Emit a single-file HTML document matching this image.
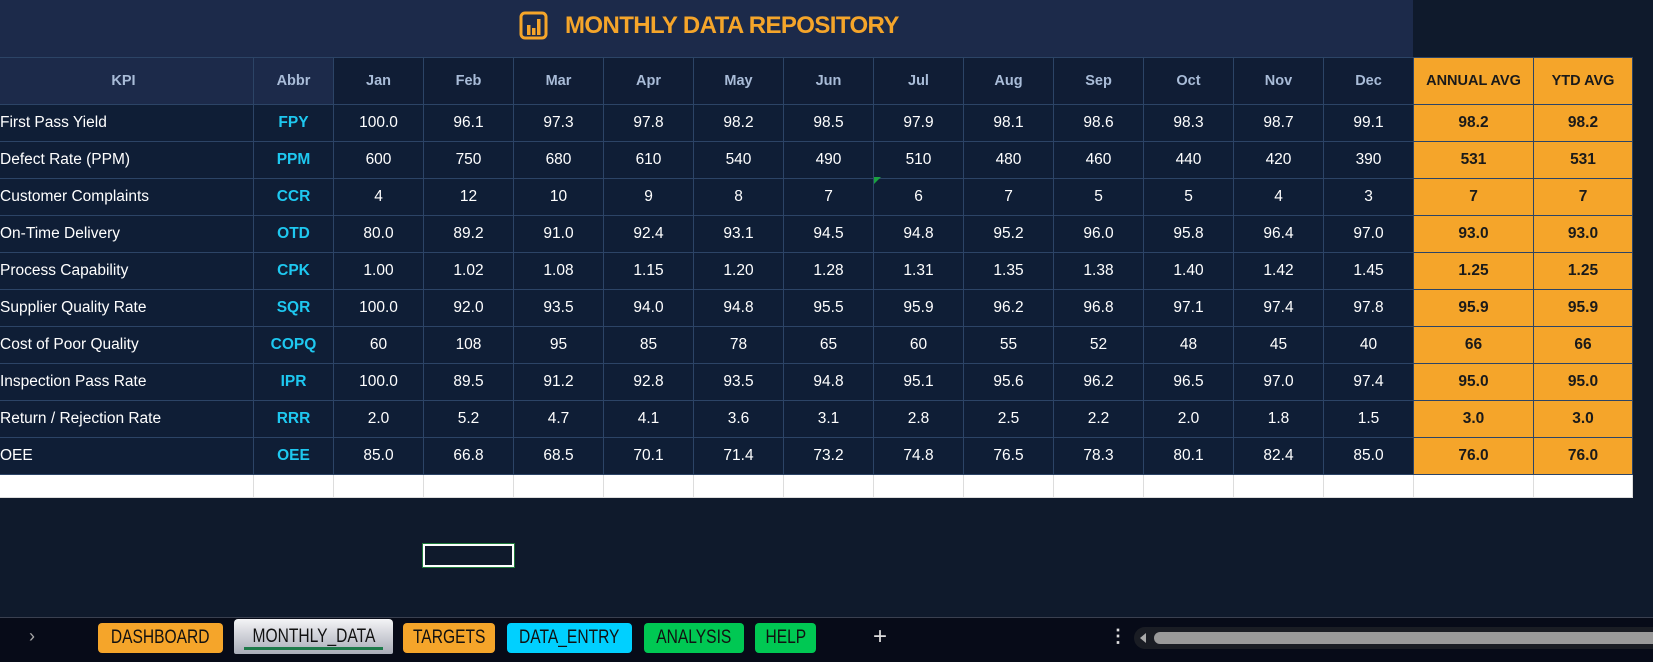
<!DOCTYPE html>
<html><head><meta charset="utf-8"><style>
*{margin:0;padding:0;box-sizing:border-box}
body{width:1653px;height:662px;background:#0f1a2c;overflow:hidden;position:relative;font-family:"Liberation Sans",sans-serif}
#title{position:absolute;left:0;top:0;width:1413px;height:57px;background:#1c2a4a}
#title .t{position:absolute;left:565px;top:12px;color:#f5a52a;font-weight:bold;font-size:24px;letter-spacing:-0.6px;white-space:nowrap}
table{position:absolute;left:-7px;top:57px;border-collapse:collapse;table-layout:fixed}
td{border:1px solid #2c4466;height:37px;text-align:center;color:#fff;font-size:15.5px;background:#0f1e36}
tr.h td{height:47px;color:#a9bcd8;font-weight:bold;font-size:14.5px;background:#101d35}
tr.h td.l{background:#1c2a4a}
td.k{text-align:left;padding-left:6px}
td.a{color:#1ec8f0;font-weight:bold}
td.o{background:#f5a52a;color:#1a1a1a;font-weight:bold}
tr.h td.o{background:#f5a52a;color:#1a1a1a}
tr.w td{background:#fff;height:23px;border-color:#ddd}
#sel{position:absolute;left:423px;top:544px;width:91px;height:23px;border:2px solid #fff;outline:1px solid #1d7a3a}
#bar{position:absolute;left:0;top:617px;width:1653px;height:45px;background:#070b18;border-top:1px solid #3a4050}
.tab{position:absolute;top:5px;height:30px;border-radius:4px;font-size:19px;color:#111;display:flex;align-items:center;justify-content:center;white-space:nowrap}
.tab span{display:inline-block;transform:scaleX(.82)}
</style></head><body>
<div id="title">
<svg style="position:absolute;left:519px;top:11px" width="29" height="29" viewBox="0 0 29 29"><rect x="2" y="2" width="25" height="25" rx="4" fill="none" stroke="#f5a52a" stroke-width="3"/><rect x="8" y="14" width="3.5" height="10" fill="#f5a52a"/><rect x="13" y="17" width="3.5" height="7" fill="#f5a52a"/><rect x="18" y="8" width="3.5" height="16" fill="#f5a52a"/></svg>
<div class="t">MONTHLY DATA REPOSITORY</div></div>
<table>
<colgroup><col style="width:260px"><col style="width:80px"><col span="12" style="width:90px"><col style="width:120px"><col style="width:99px"></colgroup>
<tr class="h"><td class="l">KPI</td><td class="l">Abbr</td><td>Jan</td><td>Feb</td><td>Mar</td><td>Apr</td><td>May</td><td>Jun</td><td>Jul</td><td>Aug</td><td>Sep</td><td>Oct</td><td>Nov</td><td>Dec</td><td class="o">ANNUAL AVG</td><td class="o">YTD AVG</td></tr>
<tr><td class="k">First Pass Yield</td><td class="a">FPY</td><td>100.0</td><td>96.1</td><td>97.3</td><td>97.8</td><td>98.2</td><td>98.5</td><td>97.9</td><td>98.1</td><td>98.6</td><td>98.3</td><td>98.7</td><td>99.1</td><td class="o">98.2</td><td class="o">98.2</td></tr>
<tr><td class="k">Defect Rate (PPM)</td><td class="a">PPM</td><td>600</td><td>750</td><td>680</td><td>610</td><td>540</td><td>490</td><td>510</td><td>480</td><td>460</td><td>440</td><td>420</td><td>390</td><td class="o">531</td><td class="o">531</td></tr>
<tr><td class="k">Customer Complaints</td><td class="a">CCR</td><td>4</td><td>12</td><td>10</td><td>9</td><td>8</td><td>7</td><td>6</td><td>7</td><td>5</td><td>5</td><td>4</td><td>3</td><td class="o">7</td><td class="o">7</td></tr>
<tr><td class="k">On-Time Delivery</td><td class="a">OTD</td><td>80.0</td><td>89.2</td><td>91.0</td><td>92.4</td><td>93.1</td><td>94.5</td><td>94.8</td><td>95.2</td><td>96.0</td><td>95.8</td><td>96.4</td><td>97.0</td><td class="o">93.0</td><td class="o">93.0</td></tr>
<tr><td class="k">Process Capability</td><td class="a">CPK</td><td>1.00</td><td>1.02</td><td>1.08</td><td>1.15</td><td>1.20</td><td>1.28</td><td>1.31</td><td>1.35</td><td>1.38</td><td>1.40</td><td>1.42</td><td>1.45</td><td class="o">1.25</td><td class="o">1.25</td></tr>
<tr><td class="k">Supplier Quality Rate</td><td class="a">SQR</td><td>100.0</td><td>92.0</td><td>93.5</td><td>94.0</td><td>94.8</td><td>95.5</td><td>95.9</td><td>96.2</td><td>96.8</td><td>97.1</td><td>97.4</td><td>97.8</td><td class="o">95.9</td><td class="o">95.9</td></tr>
<tr><td class="k">Cost of Poor Quality</td><td class="a">COPQ</td><td>60</td><td>108</td><td>95</td><td>85</td><td>78</td><td>65</td><td>60</td><td>55</td><td>52</td><td>48</td><td>45</td><td>40</td><td class="o">66</td><td class="o">66</td></tr>
<tr><td class="k">Inspection Pass Rate</td><td class="a">IPR</td><td>100.0</td><td>89.5</td><td>91.2</td><td>92.8</td><td>93.5</td><td>94.8</td><td>95.1</td><td>95.6</td><td>96.2</td><td>96.5</td><td>97.0</td><td>97.4</td><td class="o">95.0</td><td class="o">95.0</td></tr>
<tr><td class="k">Return / Rejection Rate</td><td class="a">RRR</td><td>2.0</td><td>5.2</td><td>4.7</td><td>4.1</td><td>3.6</td><td>3.1</td><td>2.8</td><td>2.5</td><td>2.2</td><td>2.0</td><td>1.8</td><td>1.5</td><td class="o">3.0</td><td class="o">3.0</td></tr>
<tr><td class="k">OEE</td><td class="a">OEE</td><td>85.0</td><td>66.8</td><td>68.5</td><td>70.1</td><td>71.4</td><td>73.2</td><td>74.8</td><td>76.5</td><td>78.3</td><td>80.1</td><td>82.4</td><td>85.0</td><td class="o">76.0</td><td class="o">76.0</td></tr>
<tr class="w"><td></td><td></td><td></td><td></td><td></td><td></td><td></td><td></td><td></td><td></td><td></td><td></td><td></td><td></td><td></td><td></td></tr>
</table>
<div style="position:absolute;left:874px;top:177px;width:0;height:0;border-top:7px solid #1aa040;border-right:7px solid transparent"></div>
<div id="sel"></div>
<div id="bar">
<div style="position:absolute;left:29px;top:8px;color:#aaa;font-size:18px">›</div>
<div class="tab" style="left:98px;width:125px;background:#f5a52a"><span>DASHBOARD</span></div>
<div class="tab" style="left:234px;width:159px;top:1px;height:35px;background:linear-gradient(#f4f4f6,#a8acb8);border-radius:4px 4px 2px 2px"><span>MONTHLY_DATA</span><div style="position:absolute;left:10px;right:10px;bottom:4px;height:3px;background:#1d7a4a"></div></div>
<div class="tab" style="left:403px;width:92px;background:#f5a52a"><span>TARGETS</span></div>
<div class="tab" style="left:507px;width:125px;background:#00d0ff"><span>DATA_ENTRY</span></div>
<div class="tab" style="left:644px;width:100px;background:#00c853"><span>ANALYSIS</span></div>
<div class="tab" style="left:755px;width:61px;background:#00c853"><span>HELP</span></div>
<div style="position:absolute;left:873px;top:5px;color:#ddd;font-size:24px">+</div>
<div style="position:absolute;left:1109px;top:8px;color:#ddd;font-size:18px;font-weight:bold">⋮</div>
<div style="position:absolute;left:1134px;top:9px;width:519px;height:22px;background:#1a1d24;border-radius:11px 0 0 11px"></div>
<div style="position:absolute;left:1140px;top:15px;width:0;height:0;border-right:6px solid #aaa;border-top:5px solid transparent;border-bottom:5px solid transparent"></div>
<div style="position:absolute;left:1154px;top:14px;width:499px;height:12px;background:#9a9a9a;border-radius:6px 0 0 6px"></div>
</div>
</body></html>
